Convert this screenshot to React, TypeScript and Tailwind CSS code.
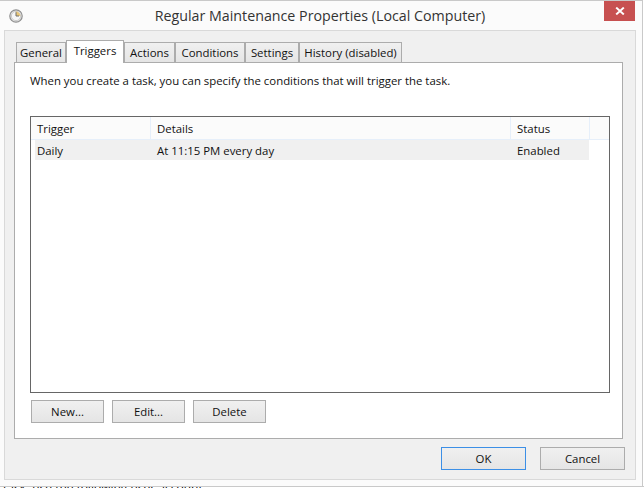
import React from 'react';

const FONT = "font-['Open_Sans','Noto_Sans',sans-serif]";

const TABS = [
  { label: 'General', w: 'w-[50px]' },
  { label: 'Triggers', w: 'w-[58px]', active: true },
  { label: 'Actions', w: 'w-[51px]' },
  { label: 'Conditions', w: 'w-[70px]' },
  { label: 'Settings', w: 'w-[54px]' },
  { label: 'History (disabled)', w: 'w-[103px]' },
];

const ClockIcon = () => (
  <svg width="14" height="14" viewBox="0 0 14 14">
    <circle cx="7" cy="7" r="6.2" fill="#e8e8e8" stroke="#8f8f8f" strokeWidth="1.2" />
    <circle cx="7" cy="7" r="4.6" fill="#f6f6f6" stroke="#b5b5b5" strokeWidth="0.6" />
    <path d="M7 2.6 A4.4 4.4 0 0 1 11.4 7 L7 7 Z" fill="#e8c77a" />
    <path d="M7 3.2 V7 H10" fill="none" stroke="#6f6f6f" strokeWidth="1" />
  </svg>
);

const Button = ({ label, className = '' }: { label: string; className?: string }) => (
  <button className={`h-[23px] border border-[#acacac] bg-gradient-to-b from-[#f0f0f0] to-[#e5e5e5] text-[11.4px] text-[#111] ${className}`}>
    {label}
  </button>
);

export default function App() {
  return (
    <div className={`${FONT} w-[644px] h-[488px] overflow-hidden bg-white flex flex-col text-[11.4px] text-[#111]`}>
      <div className="flex h-[486px] shrink-0">
        {/* window */}
        <div className="w-[642px] h-[486px] shrink-0 bg-[#fbfbfb] border-t border-[#c9c9c9] flex flex-col">
          <div className="h-[29px] shrink-0 grid grid-cols-[36px_1fr_38px] items-start">
            <div className="pl-[9px] pt-[8px]"><ClockIcon /></div>
            <div className="text-center text-[14.25px] leading-[20px] pt-[5px] text-[#333]">
              Regular Maintenance Properties (Local Computer)
            </div>
            <div className="w-[31px] h-[20px] bg-[#c75050] flex items-center justify-center">
              <svg width="10" height="8" viewBox="0 0 10 8">
                <path d="M1.2 0.6 L8.8 7.4 M8.8 0.6 L1.2 7.4" stroke="#fff" strokeWidth="2" fill="none" />
              </svg>
            </div>
          </div>

          <div className="ml-[4px] w-[632px] h-[450px] shrink-0 bg-[#f0f0f0] border border-[#d9d9d9] pl-[9px] pt-[9px] flex flex-col">
            {/* tabs */}
            <div className="flex items-end h-[22px] pl-[2px] relative z-10">
              {TABS.map((t) =>
                t.active ? (
                  <div key={t.label} className={`${t.w} h-[23px] shrink-0 bg-white border border-b-0 border-[#acacac] text-center leading-[19px] -mb-px`}>
                    {t.label}
                  </div>
                ) : (
                  <div key={t.label} className={`${t.w} h-[20px] shrink-0 bg-gradient-to-b from-[#f0f0f0] to-[#e5e5e5] border border-b-0 border-[#acacac] text-center leading-[20px]`}>
                    {t.label}
                  </div>
                )
              )}
            </div>

            {/* tab page */}
            <div className="w-[609px] h-[377px] shrink-0 bg-white border border-[#acacac] pl-[15px] flex flex-col">
              <p className="pt-[9px] leading-[18px] h-[53px] shrink-0">
                When you create a task, you can specify the conditions that will trigger the task.
              </p>

              <div className="w-[580px] h-[277px] shrink-0 border border-[#666]">
                <div className="flex h-[23px] bg-[#fbfbfb] border-b border-[#e6effa] leading-[24px]">
                  <div className="w-[120px] pl-[6px] border-r border-[#e6effa]">Trigger</div>
                  <div className="w-[360px] pl-[6px] border-r border-[#e6effa]">Details</div>
                  <div className="w-[79px] pl-[6px] border-r border-[#e6effa]">Status</div>
                </div>
                <div className="flex w-[554px] h-[20px] ml-[4px] bg-[#f0f0f0] leading-[22px]">
                  <div className="w-[116px] pl-[2px]">Daily</div>
                  <div className="w-[360px] pl-[6px]">At 11:15 PM every day</div>
                  <div className="w-[78px] pl-[6px]">Enabled</div>
                </div>
              </div>

              <div className="flex gap-[8px] pt-[7px] pl-px">
                <Button label="New..." className="w-[73px]" />
                <Button label="Edit..." className="w-[73px]" />
                <Button label="Delete" className="w-[73px]" />
              </div>
            </div>

            {/* dialog buttons */}
            <div className="flex justify-end gap-[14px] pt-[8px] pr-[10px]">
              <Button label="OK" className="w-[85px] !border-[#3c8fe6]" />
              <Button label="Cancel" className="w-[85px]" />
            </div>
          </div>
        </div>

        {/* desktop strip behind the dialog */}
        <div className="flex-1 bg-white border-l border-[#c9c9c9]" />
      </div>

      {/* page text cut off under the dialog */}
      <div className="h-[1px] shrink-0 overflow-hidden border-t border-[#c9c9c9] box-content">
        <div className="text-[12px] leading-[14px] pl-[3px] -mt-[6px] text-black whitespace-nowrap">
          task, use the following user account:
        </div>
      </div>
    </div>
  );
}
